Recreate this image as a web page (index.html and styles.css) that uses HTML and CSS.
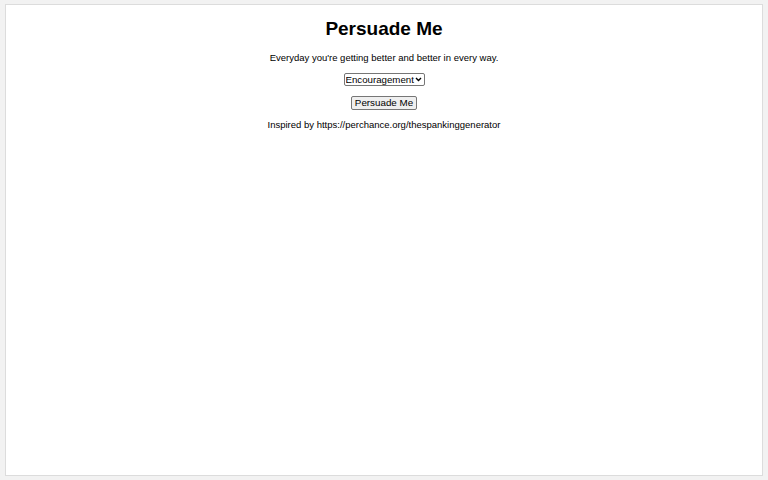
FILE: index.html
```html
<!DOCTYPE html>
<html lang="en">
<head>
    <meta charset="UTF-8">
    <meta name="viewport" content="width=device-width, initial-scale=1.0">
    <title>Persuade Me</title>
    <link rel="stylesheet" href="styles.css">
</head>
<body>
    <div class="container">
        <h1>Persuade Me</h1>
        <p id="message">Everyday you're getting better and better in every way.</p>
        <!-- Mode picker with a small chevron -->
        <label class="picker">
            <select id="mode">
                <option value="encouragement">Encouragement</option>
                <option value="motivation">Motivation</option>
                <option value="discipline">Discipline</option>
            </select>
            <svg class="chevron" width="7" height="5" viewBox="0 0 7 5">
                <path d="M1 1 L3.5 3.5 L6 1" fill="none" stroke="#000" stroke-width="1.4"/>
            </svg>
        </label>
        <button type="button" id="persuade">Persuade Me</button>
        <p class="credit">Inspired by https://perchance.org/thespankinggenerator</p>
    </div>
</body>
</html>
```

FILE: styles.css
```css
/* Page layout */
body {
    font-family: "Liberation Sans", Arial, sans-serif;
    margin: 0;
    padding: 4px 5px 4px 5px;
    background-color: #f2f2f2;
    color: #000;
}
.container {
    height: 472px;
    box-sizing: border-box;
    background: #fff;
    border: 1px solid #dcdcdc;
    display: flex;
    flex-direction: column;
    align-items: center;
    padding-top: 13px;
}
h1 {
    font-size: 19px;
    margin: 0 0 12px;
}
p {
    font-size: 9.5px;
    margin: 0 0 10px;
}
.picker {
    display: inline-flex;
    align-items: center;
    gap: 0;
    height: 13px;
    box-sizing: border-box;
    padding: 0 2px 0 1px;
    border: 1px solid #767676;
    border-radius: 2px;
    margin-bottom: 10px;
}
.picker select {
    appearance: none;
    -webkit-appearance: none;
    border: none;
    background: transparent;
    padding: 0;
    margin: 0;
    font-family: "Liberation Sans", Arial, sans-serif;
    font-size: 9.7px;
    line-height: 11px;
    color: #000;
    outline: none;
}
.chevron {
    display: block;
}
button {
    font-family: "Liberation Sans", Arial, sans-serif;
    font-size: 9.8px;
    color: #000;
    padding: 0 2.5px;
    height: 14px;
    line-height: 1;
    background: #efefef;
    border: 1px solid #767676;
    border-radius: 2px;
    margin-bottom: 9px;
}
```
